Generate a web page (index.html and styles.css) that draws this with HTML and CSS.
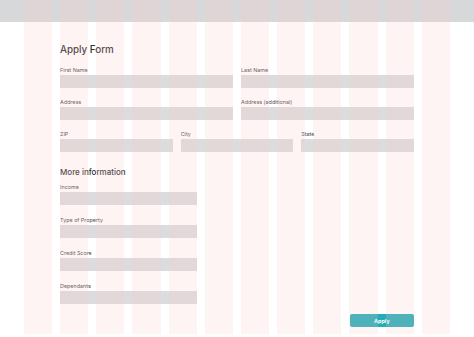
FILE: index.html
```html
<!DOCTYPE html>
<html lang="en">
<head>
<meta charset="utf-8">
<title>Apply Form</title>
<link rel="stylesheet" href="styles.css">
</head>
<body>
<div class="page">
  <div class="topbar"></div>
  <main class="form">
    <h1 class="title">Apply Form</h1>
    <div class="row cols-2 first-row">
      <div class="field"><label class="label">First Name</label><div class="input"></div></div>
      <div class="field"><label class="label">Last Name</label><div class="input"></div></div>
    </div>
    <div class="row cols-2">
      <div class="field"><label class="label">Address</label><div class="input"></div></div>
      <div class="field"><label class="label">Address (additional)</label><div class="input"></div></div>
    </div>
    <div class="row cols-3">
      <div class="field"><label class="label">ZIP</label><div class="input"></div></div>
      <div class="field"><label class="label">City</label><div class="input"></div></div>
      <div class="field"><label class="label">State</label><div class="input"></div></div>
    </div>
    <h2 class="subtitle">More information</h2>
    <div class="narrow">
      <div class="field"><label class="label">Income</label><div class="input"></div></div>
      <div class="field"><label class="label">Type of Property</label><div class="input"></div></div>
      <div class="field"><label class="label">Credit Score</label><div class="input"></div></div>
      <div class="field"><label class="label">Dependants</label><div class="input"></div></div>
    </div>
    <div class="actions"><button class="btn" type="button">Apply</button></div>
  </main>
  <div class="grid-overlay">
    <span></span><span></span><span></span><span></span><span></span><span></span>
    <span></span><span></span><span></span><span></span><span></span><span></span>
  </div>
</div>
</body>
</html>
```
FILE: styles.css
```css
* { box-sizing: border-box; }
html, body { margin: 0; padding: 0; background: #fff; }
body {
  font-family: Inter, "Noto Sans", sans-serif;
  color: #333;
  width: 474px;
  height: 337px;
  overflow: hidden;
}
.page {
  position: relative;
  width: 474px;
  height: 337px;
}
.topbar {
  height: 22px;
  background: #d7d8da;
}
.form {
  padding: 0 60px;
  display: flex;
  flex-direction: column;
}
.title {
  margin: 21px 0 0;
  font-size: 9.8px;
  line-height: 14px;
  font-weight: 500;
  color: #2f2f2f;
}
.subtitle {
  margin: 14px 0 0;
  font-size: 8px;
  line-height: 12px;
  font-weight: 500;
  color: #2f2f2f;
}
.row {
  display: grid;
  gap: 8px;
}
.cols-2 { grid-template-columns: 1fr 1fr; }
.cols-3 { grid-template-columns: 1fr 1fr 1fr; }
.field {
  display: flex;
  flex-direction: column;
  margin-top: 10.5px;
}
.first-row .field { margin-top: 9.5px; }
.label {
  font-size: 5.4px;
  line-height: 7px;
  color: #4a4a4a;
  margin-bottom: 1.5px;
}
.input {
  height: 13px;
  background: #dcdcde;
}
.narrow {
  width: 136.7px;
  display: flex;
  flex-direction: column;
}
.narrow .field { margin-top: 11.5px; }
.narrow .field:first-child { margin-top: 5.5px; }
.actions {
  display: flex;
  justify-content: flex-end;
  margin-top: 10px;
}
.btn {
  width: 64.3px;
  height: 13px;
  padding: 0;
  border: 0;
  border-radius: 2px;
  background: #22adb8;
  color: #fff;
  font-family: Inter, sans-serif;
  font-size: 5.4px;
  font-weight: 700;
}
.grid-overlay {
  position: absolute;
  left: 24px;
  right: 24px;
  top: 0;
  bottom: 3px;
  display: grid;
  grid-template-columns: repeat(12, 1fr);
  column-gap: 8px;
  pointer-events: none;
}
.grid-overlay span {
  background: rgba(255, 200, 200, 0.2);
}
```
